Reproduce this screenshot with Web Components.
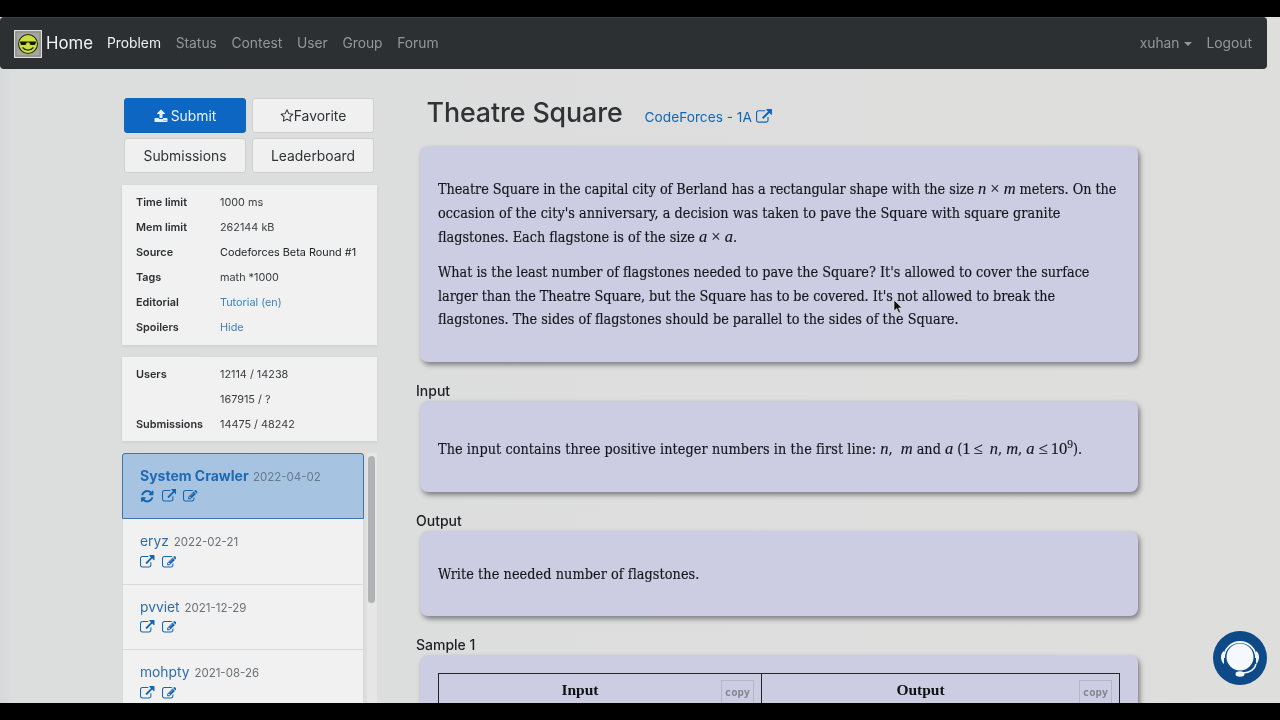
<!DOCTYPE html>
<html><head><meta charset="utf-8"><title>Theatre Square</title>
<style>
html,body{margin:0;padding:0;height:720px;overflow:hidden;background:#000;font-family:Inter,"Liberation Sans",sans-serif;}
</style></head><body>
<x-app></x-app>
<template id="t-app"><style>
:host{display:flex;flex-direction:column;height:720px;background:#000}
.screen{margin-top:17px;height:686px;overflow:hidden;background:linear-gradient(90deg,#d6d9da 0,#dcdddd 12px,#dededd 100%);position:relative;filter:blur(.3px)}
.main{display:flex;padding-top:29px;align-items:flex-start}
.left{width:255px;margin-left:122px;flex:none;display:flex;flex-direction:column}
.right{margin-left:43px;width:718px;flex:none}
</style><div class="screen"><x-navbar></x-navbar>
<div class="main"><div class="left"><x-actions></x-actions>
<x-info rows='[["Time limit","1000 ms"],["Mem limit","262144 kB"],["Source","Codeforces Beta Round #1",1],["Tags","math *1000"],["Editorial","Tutorial (en)",2],["Spoilers","Hide",2]]' style="margin-top:12px"></x-info>
<x-info rows='[["Users","12114 / 14238"],["","167915 / ?"],["Submissions","14475 / 48242"]]' style="margin-top:12px;padding-bottom:5px"></x-info>
<x-sublist style="margin-top:12px"></x-sublist></div>
<div class="right"><x-problem></x-problem></div></div>
<x-chat></x-chat><x-cursor></x-cursor></div></template>

<template id="t-navbar"><style>
:host{display:flex;align-items:center;height:52px;width:1267px;background:#2d3032;box-sizing:border-box;padding:0 15px 1px 14px;font-size:13.800px;color:#93979a;border-top:1px solid #3a3d3f;border-radius:4px}
.logo{width:28px;height:28px;flex:none;margin-top:1px}
.home{font-size:16.800px;color:#f4f5f5;margin-left:4px;margin-right:14px}
a{margin-right:14.700px}
.on{color:#eff0f0}
.sp{flex:1}
.car{display:inline-block;border:4px solid transparent;border-top-color:#93979a;border-bottom:0;vertical-align:2px;margin-left:4px}
.u{margin-right:15px}.l{margin-right:0}
</style>
<svg class="logo" viewBox="0 0 28 28"><rect width="28" height="28" fill="#a5a6a1"/><rect x=".5" y=".5" width="27" height="27" fill="none" stroke="#dededb"/><rect x="2" y="2" width="24" height="24" fill="none" stroke="#7f807c" stroke-width=".8"/><circle cx="14" cy="14" r="9.500" fill="#cbe03a" stroke="#262a12" stroke-width="1.100"/><path d="M6 11.500h16v1l-1.200 2.600h-4.300l-1.300-2.600h-2.400l-1.300 2.600H7.200L6 12.500z" fill="#15170f"/><path d="M8.500 17.500c3 3.400 8 3.400 11 0" fill="none" stroke="#262a12" stroke-width="1.300"/></svg>
<span class="home">Home</span><a class="on">Problem</a><a>Status</a><a>Contest</a><a>User</a><a>Group</a><a>Forum</a><span class="sp"></span><a class="u">xuhan<span class="car"></span></a><a class="l">Logout</a></template>

<template id="t-btn"><style>
:host{display:flex;align-items:center;justify-content:center;box-sizing:border-box;width:122px;height:35px;border-radius:3px;background:#f0f0f0;border:1px solid #cfcfcf;color:#303234;font-size:13.900px;gap:0}
:host([primary]){background:#0d66c2;border-color:#0d66c2;color:#e4f2fb}
</style><slot></slot></template>

<template id="t-actions"><style>
:host{display:grid;grid-template-columns:122px 122px;gap:5px 6px;margin-left:2px}
svg{width:14px;height:14px;fill:currentColor;margin-right:3px}
.s{margin-right:0}
</style>
<x-btn primary><svg viewBox="0 0 1792 1792"><path d="M1344 1472q0-26-19-45t-45-19-45 19-19 45 19 45 45 19 45-19 19-45zm256 0q0-26-19-45t-45-19-45 19-19 45 19 45 45 19 45-19 19-45zm128-224v320q0 40-28 68t-68 28h-1472q-40 0-68-28t-28-68v-320q0-40 28-68t68-28h427q21 56 70.500 92t110.500 36h256q61 0 110.500-36t70.500-92h427q40 0 68 28t28 68zm-325-648q-17 40-59 40h-256v448q0 26-19 45t-45 19h-256q-26 0-45-19t-19-45v-448h-256q-42 0-59-40-17-39 14-69l448-448q18-19 45-19t45 19l448 448q31 30 14 69z"/></svg>Submit</x-btn>
<x-btn><svg class="s" viewBox="0 0 1792 1792"><path d="M1201 1004l306-297-422-62-189-382-189 382-422 62 306 297-73 421 378-199 377 199zm527-357q0 22-26 48l-363 354 86 500q1 7 1 20 0 50-41 50-19 0-40-12l-449-236-449 236q-22 12-40 12-21 0-31.500-14.500t-10.500-35.500q0-6 2-20l86-500-364-354q-25-27-25-48 0-37 56-46l502-73 225-455q19-41 49-41t49 41l225 455 502 73q56 9 56 46z"/></svg>Favorite</x-btn>
<x-btn>Submissions</x-btn><x-btn>Leaderboard</x-btn></template>

<template id="t-info"><style>
:host{display:block;background:#f1f1f1;padding:4px 14px 6px 14px;font-size:10.850px;color:#3a3c3e;box-shadow:0 1px 3px rgba(0,0,0,.08)}
.r{display:grid;grid-template-columns:84px 1fr;height:25px;align-items:center;white-space:nowrap}
b{font-weight:600;color:#2d2f31}
.k1{color:#212325}.k2{color:#3f7fb5}
</style><div id="b"></div></template>

<template id="t-sublist"><style>
:host{display:flex;height:260px;overflow:hidden;gap:3px}
.l{width:242px;flex:none}
.track{width:10px;padding-top:3px;flex:none;background:#e6e6e6}
.th{width:7px;height:147px;border-radius:4px;background:#b0b2b3;margin:0 1px}
</style><div class="l"><slot></slot><x-sub name="System Crawler" date="2022-04-02" active></x-sub><x-sub name="eryz" date="2022-02-21"></x-sub><x-sub name="pvviet" date="2021-12-29"></x-sub><x-sub name="mohpty" date="2021-08-26"></x-sub></div><div class="track"><div class="th"></div></div></template>

<template id="t-sub"><style>
:host{display:block;box-sizing:border-box;height:65.500px;background:#f1f1f1;border:1px solid #d9d9d9;border-top:0;padding:12px 17px 0 17px;color:#2f6da5}
:host([active]){background:#a6c3e2;border:1px solid #3f74ad;border-radius:3px 3px 0 0;padding-top:12px;height:66px}
.n{font-size:13.800px;line-height:20px;white-space:nowrap}
:host([active]) .n{font-weight:700;color:#1f69b5;font-size:14px}
.d{font-size:11.500px;color:#6b7176;margin-left:1px}
:host([active]) .d{color:#68798d;font-weight:400}
.i{display:flex;gap:7px;height:18px;align-items:center;color:#1666ad;margin-top:1px}
:host([active]) .i{margin-top:0}
svg{width:14.500px;height:14.500px;fill:currentColor}
</style><div class="n"><span id="n"></span> <span class="d" id="d"></span></div><div class="i" id="i"></div></template>

<template id="t-problem"><style>
:host{display:block}
h1{font-size:26.800px;font-weight:500;color:#303234;margin:-2px 0 0 6.500px;letter-spacing:-.1px;line-height:32px;white-space:nowrap;display:flex;align-items:flex-start;height:50px}
a{font-size:13.700px;line-height:20px;font-weight:400;color:#0f67b5;margin:11px 0 0 22px;display:inline-flex;align-items:center;letter-spacing:0}
a svg{width:16px;height:16px;fill:currentColor;margin-left:4px}
.lb{font-size:14px;font-weight:500;color:#1e2022;display:flex;align-items:center;margin-left:-4px;box-sizing:border-box;padding-top:18px;height:39px}
.m{font-family:"Liberation Serif",serif;font-style:italic;font-size:16.500px}
.u{font-family:"Liberation Serif",serif;font-size:16.500px}
.w{margin-left:3px}
sup{font-size:11.500px;line-height:0;font-family:"Liberation Serif",serif}
p{margin:0;white-space:nowrap}
table{border-collapse:collapse;table-layout:fixed;width:682px;font-family:"Liberation Serif",serif;font-size:15.500px;color:#111;-webkit-text-stroke:0}
th{border:1px solid #23252b;height:33px;font-weight:700;position:relative;padding:0 40px 0 0;box-sizing:border-box}
.c{position:absolute;right:7px;top:6px;width:33px;height:24px;box-sizing:border-box;border:1px solid #b6b6c4;font:700 10.500px "DejaVu Sans Mono","Liberation Mono",monospace;color:#85858f;display:flex;align-items:center;justify-content:center}
.th1{width:323px}
</style>
<h1>Theatre Square<a>CodeForces - 1A<svg viewBox="0 0 1792 1792"><path d="M1408 928v320q0 119-84.500 203.500t-203.500 84.500h-832q-119 0-203.500-84.500t-84.500-203.500v-832q0-119 84.500-203.500t203.500-84.500h704q14 0 23 9t9 23v64q0 14-9 23t-23 9h-704q-66 0-113 47t-47 113v832q0 66 47 113t113 47h832q66 0 113-47t47-113v-320q0-14 9-23t23-9h64q14 0 23 9t9 23zm384-864v512q0 26-19 45t-45 19-45-19l-176-176-652 652q-10 10-23 10t-23-10l-114-114q-10-10-10-23t10-23l652-652-176-176q-19-19-19-45t19-45 45-19h512q26 0 45 19t19 45z"/></svg></a></h1>
<x-card style="height:216px"><p><span style="letter-spacing:-.05px">Theatre Square in the capital city of Berland has a rectangular shape with the size <span class="m">n</span> <span class="u">×</span> <span class="m">m</span> meters. On the</span><br><span style="letter-spacing:.03px">occasion of the city's anniversary, a decision was taken to pave the Square with square granite</span><br>flagstones. Each flagstone is of the size <span class="m">a</span> <span class="u">×</span> <span class="m">a</span>.</p><p style="margin-top:11.500px">What is the least number of flagstones needed to pave the Square? It's allowed to cover the surface<br><span style="letter-spacing:-.05px">larger than the Theatre Square, but the Square has to be covered. It's not allowed to break the</span><br>flagstones. The sides of flagstones should be parallel to the sides of the Square.</p></x-card>
<div class="lb">Input</div>
<x-card style="height:91px;padding-top:36px"><p><span style="letter-spacing:.07px">The input contains three positive integer numbers in the first line:</span> <span class="m">n</span>,&nbsp; <span class="m">m</span> and <span class="m">a</span> (<span class="u">1</span><span class="u w">≤</span> <span class="m w">n</span>, <span class="m">m</span>, <span class="m">a</span> <span class="u">≤</span><span class="u w">10</span><sup>9</sup>).</p></x-card>
<div class="lb">Output</div>
<x-card style="height:85px;padding-top:32px"><p style="letter-spacing:.07px">Write the needed number of flagstones.</p></x-card>
<div class="lb">Sample 1</div>
<x-card style="height:120px;padding-top:18px"><table><tr><th class="th1">Input<span class="c">copy</span></th><th>Output<span class="c">copy</span></th></tr></table></x-card>
</template>

<template id="t-card"><style>
:host{display:block;box-sizing:border-box;background:#ccccE2;border-radius:8px;box-shadow:2px 3px 5px rgba(50,50,60,.55);padding:31px 18px 0 18px;font-family:"DejaVu Serif Condensed","DejaVu Serif",serif;font-stretch:condensed;font-size:14.300px;line-height:23.500px;color:#16171c;-webkit-text-stroke:.15px #16171c}
</style><slot></slot></template>

<template id="t-chat"><style>
:host{position:absolute;right:13px;top:614px;width:54px;height:54px}
</style><svg viewBox="0 0 54 54" width="54" height="54"><circle cx="27" cy="27" r="27" fill="#0e4a88"/><circle cx="27" cy="26" r="13.500" fill="#f5f9fd"/><path d="M11 27a16 16 0 0 1 32 0" fill="none" stroke="#f5f9fd" stroke-width="1.800"/><path d="M11 20c-4 2-4 10 0 13zM43 20c4 2 4 10 0 13z" fill="#f5f9fd"/><path d="M43 33c-1 5-6 9-13 9" fill="none" stroke="#f5f9fd" stroke-width="1.500"/><ellipse cx="27" cy="43" rx="4.500" ry="2.800" fill="#f5f9fd"/></svg></template>

<template id="t-cursor"><style>
:host{position:absolute;left:893px;top:281px;width:10px;height:15px}
</style><svg width="10" height="15" viewBox="0 0 10 15"><path d="M1 1v11l2.800-2.500 2 4.500 1.800-.8-2-4.300H9z" fill="#111" stroke="#eee" stroke-width=".6"/></svg></template>

<script>
function reg(tag,tid,init){customElements.define(tag,class extends HTMLElement{constructor(){super();const s=this.attachShadow({mode:'open'});s.appendChild(document.getElementById(tid).content.cloneNode(true));}connectedCallback(){if(init)init.call(this,this.shadowRoot);}});}
const EXT='<svg viewBox="0 0 1792 1792"><path d="M1408 928v320q0 119-84.500 203.500t-203.500 84.500h-832q-119 0-203.500-84.500t-84.500-203.500v-832q0-119 84.500-203.500t203.500-84.500h704q14 0 23 9t9 23v64q0 14-9 23t-23 9h-704q-66 0-113 47t-47 113v832q0 66 47 113t113 47h832q66 0 113-47t47-113v-320q0-14 9-23t23-9h64q14 0 23 9t9 23zm384-864v512q0 26-19 45t-45 19-45-19l-176-176-652 652q-10 10-23 10t-23-10l-114-114q-10-10-10-23t10-23l652-652-176-176q-19-19-19-45t19-45 45-19h512q26 0 45 19t19 45z"/></svg>';
const EDIT='<svg viewBox="0 0 1792 1792"><path d="M888 1184l116-116-152-152-116 116v56h96v96h56zm440-720q-16-16-33 1l-350 350q-17 17-1 33t33-1l350-350q17-17 1-33zm80 594v190q0 119-84.500 203.500t-203.500 84.500h-832q-119 0-203.500-84.500t-84.500-203.500v-832q0-119 84.500-203.500t203.500-84.500h832q63 0 117 25 15 7 18 23 3 17-9 29l-49 49q-14 14-32 8-23-6-45-6h-832q-66 0-113 47t-47 113v832q0 66 47 113t113 47h832q66 0 113-47t47-113v-126q0-13 9-22l64-64q15-15 35-7t20 29zm-96-738l288 288-672 672h-288v-288zm444 132l-92 92-288-288 92-92q28-28 68-28t68 28l152 152q28 28 28 68t-28 68z"/></svg>';
const REF='<svg viewBox="0 0 1792 1792"><path d="M1639 1056q0 5-1 7-64 268-268 434.500t-478 166.500q-146 0-282.500-55t-243.500-157l-129 129q-19 19-45 19t-45-19-19-45v-448q0-26 19-45t45-19h448q26 0 45 19t19 45-19 45l-137 137q71 66 161 102t187 36q134 0 250-65t186-179q11-17 53-117 8-23 30-23h192q13 0 22.500 9.500t9.500 22.500zm25-800v448q0 26-19 45t-45 19h-448q-26 0-45-19t-19-45 19-45l138-138q-148-137-349-137-134 0-250 65t-186 179q-11 17-53 117-8 23-30 23h-199q-13 0-22.500-9.500t-9.500-22.500v-7q65-268 270-434.500t480-166.500q146 0 284 55.500t245 156.500l130-129q19-19 45-19t45 19 19 45z"/></svg>';
reg('x-app','t-app');reg('x-navbar','t-navbar');reg('x-btn','t-btn');reg('x-actions','t-actions');
reg('x-info','t-info',function(s){const b=s.getElementById('b');JSON.parse(this.getAttribute('rows')).forEach(r=>{const d=document.createElement('div');d.className='r';const k=document.createElement('b');k.textContent=r[0];const v=document.createElement('span');v.textContent=r[1];if(r[2])v.className='k'+r[2];d.append(k,v);b.append(d);});});
reg('x-sublist','t-sublist');
reg('x-sub','t-sub',function(s){s.getElementById('n').textContent=this.getAttribute('name');s.getElementById('d').textContent=this.getAttribute('date');s.getElementById('i').innerHTML=(this.hasAttribute('active')?REF:'')+EXT+EDIT;});
reg('x-problem','t-problem');reg('x-card','t-card');reg('x-chat','t-chat');reg('x-cursor','t-cursor');
</script>
</body></html>
